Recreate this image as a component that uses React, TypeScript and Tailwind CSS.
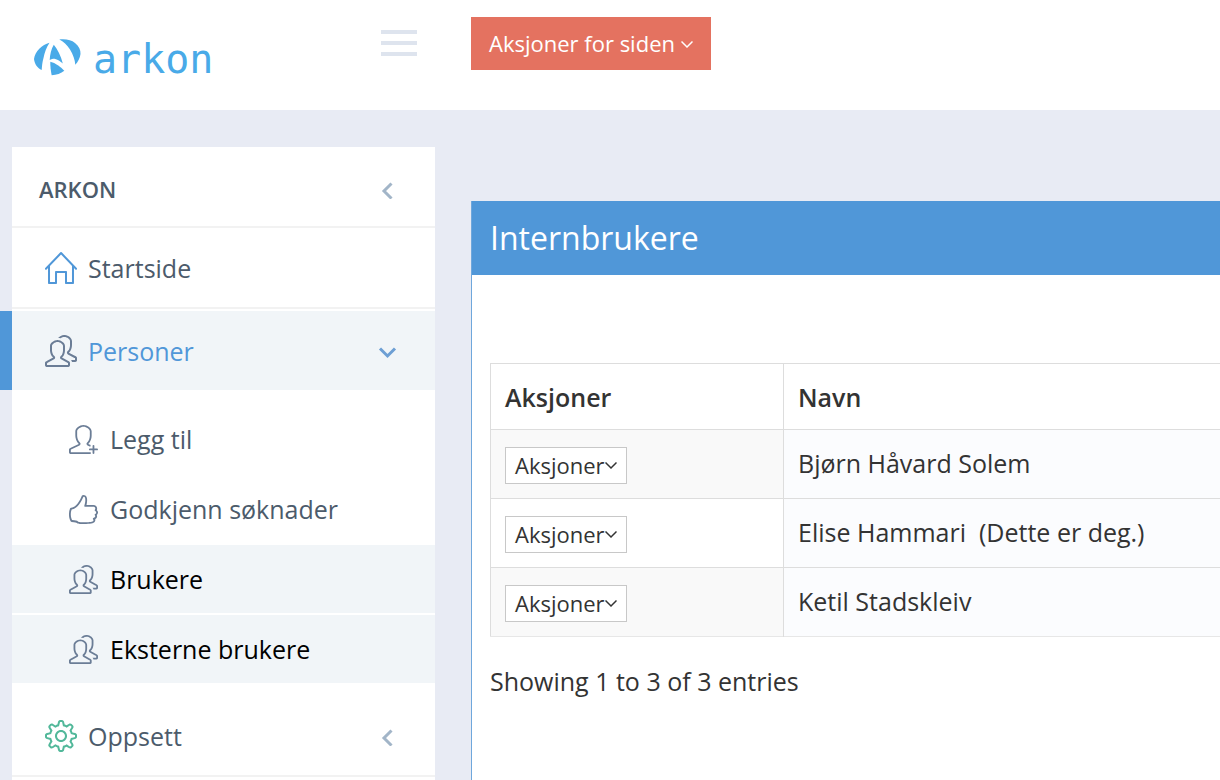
import type { ReactNode } from 'react';
import { SlHome, SlLike, SlPeople, SlSettings, SlUserFollow } from 'react-icons/sl';

const users = ['Bjørn Håvard Solem', 'Elise Hammari \u00a0(Dette er deg.)', 'Ketil Stadskleiv'];

const subItems = [
    { label: 'Legg til', icon: SlUserFollow, active: false },
    { label: 'Godkjenn søknader', icon: SlLike, active: false },
    { label: 'Brukere', icon: SlPeople, active: true },
    { label: 'Eksterne brukere', icon: SlPeople, active: true },
];

function Logo() {
    return (
        <a href="#" className="flex items-center gap-3 text-[#49aae8]">
            <svg width="48" height="42" viewBox="0 0 48 42" fill="currentColor" aria-hidden="true">
                <path d="M16.5 4.700C9 6.500 2 13.500 1 21C1.500 26 4.500 30 8.700 32C9 28 9.300 24 10.500 20C11.500 14.500 13.500 9 16.500 4.700Z" />
                <path d="M26.300 1.500C33 0.800 38.500 2 42 5C46 8 47.800 12 47.500 16C47 20 45 24 42.300 26.700C42 22 40 16.500 37 11.500C34 7 30.500 3.500 26.300 1.500Z" />
                <path d="M20.800 6.800C24.500 11.500 28 18 29.800 25.500C27.500 23.500 24.500 21.500 21.500 20.800C20 20.800 18 21.200 16.700 22C17 16 18.300 11 20.800 6.800Z" />
                <path d="M17.300 23.700C22.500 25 27.500 28.500 31.300 32.700C28 35.500 23.500 37 18.700 37.200C17.700 32.500 17.200 28 17.300 23.700Z" />
            </svg>
            <span className="font-['DejaVu_Sans_Mono',monospace] text-[40px] leading-[42px]">arkon</span>
        </a>
    );
}

function Angle({ direction, className }: { direction: 'left' | 'down'; className?: string }) {
    return (
        <svg width="20" height="20" viewBox="0 0 20 20" fill="none" stroke="currentColor" strokeWidth="3" className={className} aria-hidden="true">
            <path d={direction === 'left' ? 'M13.500 4.500L6 12L13.500 19.500' : 'M2 7.500L9.500 15L17 7.500'} />
        </svg>
    );
}

function Caret() {
    return (
        <svg width="12" height="10" viewBox="0 0 12 10" fill="none" stroke="currentColor" strokeWidth="1.500" aria-hidden="true">
            <path d="M0.500 2.500L6 8L11.500 2.500" />
        </svg>
    );
}

function MenuRow({ icon, label, children }: { icon: ReactNode; label: string; children?: ReactNode }) {
    return (
        <a href="#" className="flex h-[79px] items-center pr-[37px] pl-[33px]">
            {icon}
            <span className="ml-[11px] flex-grow">{label}</span>
            {children}
        </a>
    );
}

function Sidebar() {
    return (
        <aside className="w-[435px] shrink-0 pt-[37px] pl-3">
            <nav className="min-h-full bg-white text-[25px] leading-9 text-[#4c5b6b]">
                <div className="flex h-[81px] items-center justify-between border-b-2 border-[#f2f2f2] pt-1 pr-[37px] pl-[27px]">
                    <h3 className="text-[22px] font-semibold">ARKON</h3>
                    <Angle direction="left" className="text-[#a2b5c8]" />
                </div>
                <div className="mb-0.5 border-b-2 border-[#f2f2f2]">
                    <MenuRow icon={<SlHome size={32} className="text-[#5097d8]" />} label="Startside" />
                </div>
                {/* Active section, the marker reaches past the panel edge */}
                <div className="-ml-3 border-l-12 border-[#5097d8] bg-[#f1f5f8] text-[#5097d8]">
                    <MenuRow icon={<SlPeople size={32} className="text-[#6b7d96]" />} label="Personer">
                        <Angle direction="down" className="text-[#6d9fd4]" />
                    </MenuRow>
                </div>
                <ul className="flex flex-col gap-0.5 pt-[15px] pb-[13px]">
                    {subItems.map(({ label, icon: Icon, active }) => (
                        <li key={label}>
                            <a
                                href="#"
                                className={`flex h-[68px] items-center gap-3 pl-[57px] ${active ? 'bg-[#f1f5f8] text-black' : ''}`}
                            >
                                <Icon size={29} className="text-[#6b7d96]" />
                                {label}
                            </a>
                        </li>
                    ))}
                </ul>
                <div className="border-b-2 border-[#f2f2f2]">
                    <MenuRow icon={<SlSettings size={32} className="text-[#52b89a]" />} label="Oppsett">
                        <Angle direction="left" className="text-[#a2b5c8]" />
                    </MenuRow>
                </div>
            </nav>
        </aside>
    );
}

function UserTable() {
    return (
        <table className="w-full border-collapse border border-r-0 border-[#ddd] border-b-[#e7e7e7]">
            <thead>
                <tr className="h-[66px] text-left">
                    <th className="w-[293px] border-r border-[#ddd] pl-[14px] font-semibold">Aksjoner</th>
                    <th className="pl-[14px] font-semibold">Navn</th>
                </tr>
            </thead>
            <tbody>
                {users.map((name) => (
                    <tr key={name} className="h-[69px] border-t border-[#ddd] bg-white odd:bg-[#f9f9f9]">
                        <td className="border-r border-[#ddd] pt-0.5 pl-[14px]">
                            <button
                                type="button"
                                className="flex h-[37px] items-center border border-[#c8c8c8] bg-white px-[9px] text-[22px] leading-8"
                            >
                                Aksjoner
                                <Caret />
                            </button>
                        </td>
                        <td className="bg-[#fbfcfe] pb-0.5 pl-[14px]">{name}</td>
                    </tr>
                ))}
            </tbody>
        </table>
    );
}

export default function App() {
    return (
        <div className="flex min-h-screen flex-col bg-[#e8ebf4] font-['Open_Sans',sans-serif] text-[#333]">
            <header className="flex h-[110px] shrink-0 items-start bg-white">
                <div className="w-[381px] pt-[38px] pl-[33px]">
                    <Logo />
                </div>
                <button type="button" aria-label="Meny" className="mt-[30px] flex w-9 flex-col gap-[7px]">
                    <span className="h-1 w-full bg-[#dee4ee]" />
                    <span className="h-1 w-full bg-[#dee4ee]" />
                    <span className="h-1 w-full bg-[#dee4ee]" />
                </button>
                <button
                    type="button"
                    className="mt-[17px] ml-[54px] flex h-[53px] items-center gap-1.5 bg-[#e47260] px-[18px] text-[22px] text-white"
                >
                    Aksjoner for siden
                    <Caret />
                </button>
            </header>
            <div className="flex flex-grow">
                <Sidebar />
                <main className="ml-9 flex flex-grow flex-col pt-[91px]">
                    <section className="flex-grow border-l border-[#6fa7dc] bg-white text-[25px] leading-9">
                        <h1 className="flex h-[74px] items-center bg-[#5097d8] pl-[18px] text-[32px] text-white">Internbrukere</h1>
                        <div className="pt-[88px] pl-[18px]">
                            <UserTable />
                            <p className="mt-[26px]">Showing 1 to 3 of 3 entries</p>
                        </div>
                    </section>
                </main>
            </div>
        </div>
    );
}
